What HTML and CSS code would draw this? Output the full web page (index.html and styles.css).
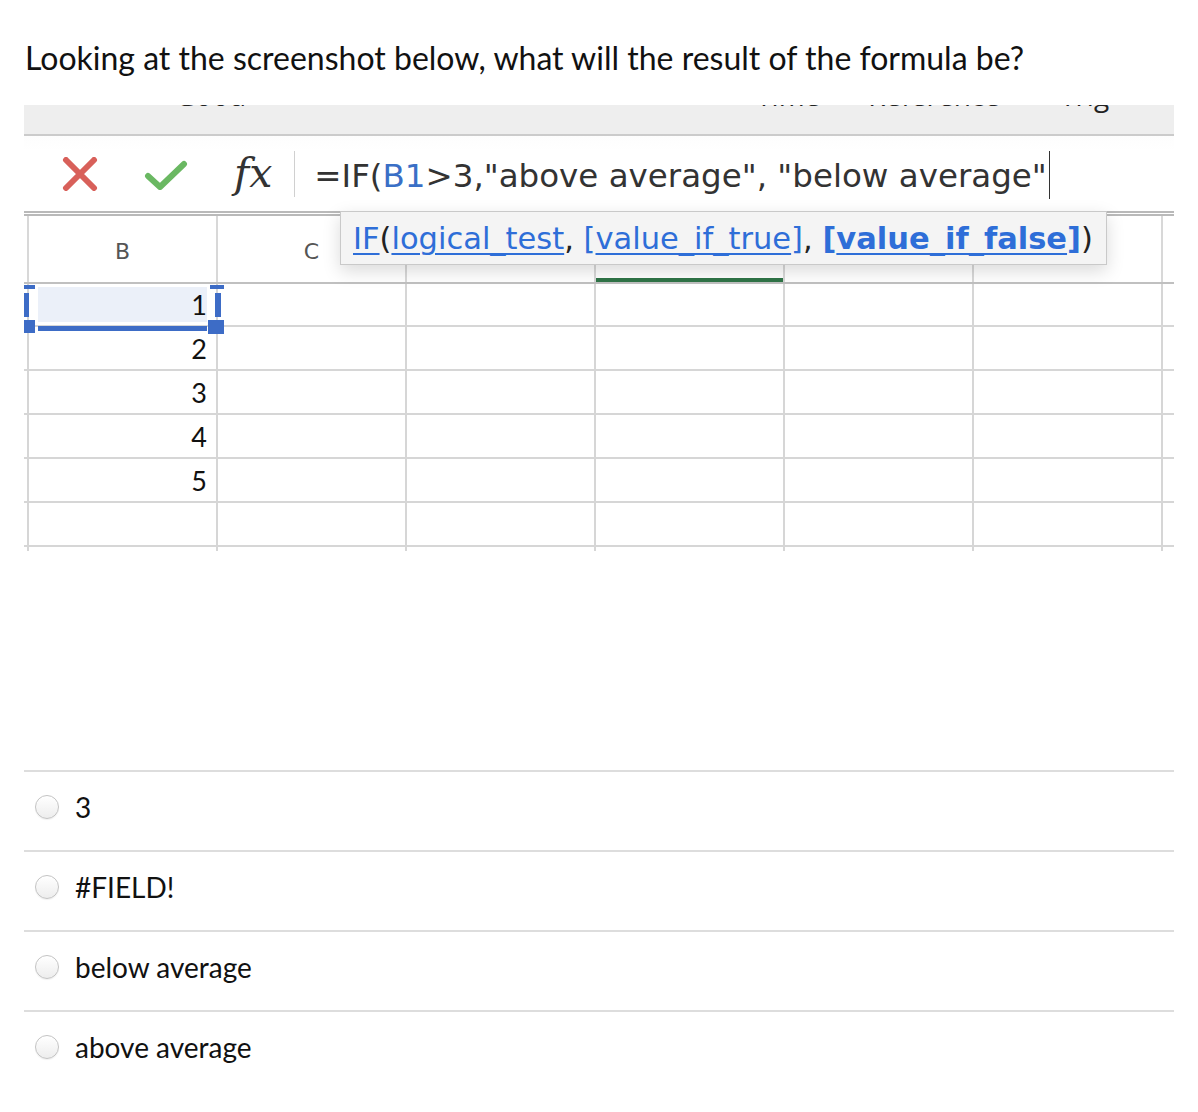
FILE: index.html
```html
<!DOCTYPE html>
<html lang="en">
<head>
    <meta charset="UTF-8">
    <meta name="viewport" content="width=device-width, initial-scale=1.0">
    <title>Quiz question</title>
    <link rel="stylesheet" href="styles.css">
</head>
<body>
    <p class="question">Looking at the screenshot below, what will the result of the formula be?</p>

    <div class="sheet">
        <div class="ribbon">
            <span class="tab tab-good">Good</span>
            <span class="tab tab-time">Time</span>
            <span class="tab tab-ref">Reference</span>
            <span class="tab tab-trig">Trig</span>
        </div>

        <div class="formula-bar">
            <svg class="btn-cancel" width="36" height="34" viewBox="0 0 36 34">
                <path d="M4 3 L32 31 M32 3 L4 31" stroke="#d8605a" stroke-width="6" stroke-linecap="round" fill="none"/>
            </svg>
            <svg class="btn-ok" width="44" height="30" viewBox="0 0 44 30">
                <path d="M4 16 L16 27 L40 4" stroke="#6ab862" stroke-width="6" stroke-linecap="round" stroke-linejoin="round" fill="none"/>
            </svg>
            <span class="fx">fx</span>
            <span class="sep"></span>
            <span class="formula">=IF(<span class="ref">B1</span>&gt;3,"above average", "below average"</span>
            <span class="caret"></span>
        </div>

        <div class="head">
            <div></div>
            <div>B</div>
            <div>C</div>
            <div></div>
            <div class="active"></div>
            <div></div>
            <div></div>
            <div></div>
        </div>

        <div class="body">
            <div class="row first"><div></div><div class="num"><span>1</span></div><div></div><div></div><div></div><div></div><div></div><div></div></div>
            <div class="row"><div></div><div class="num">2</div><div></div><div></div><div></div><div></div><div></div><div></div></div>
            <div class="row"><div></div><div class="num">3</div><div></div><div></div><div></div><div></div><div></div><div></div></div>
            <div class="row"><div></div><div class="num">4</div><div></div><div></div><div></div><div></div><div></div><div></div></div>
            <div class="row"><div></div><div class="num">5</div><div></div><div></div><div></div><div></div><div></div><div></div></div>
            <div class="row"><div></div><div></div><div></div><div></div><div></div><div></div><div></div><div></div></div>
            <div class="row tail"><div></div><div></div><div></div><div></div><div></div><div></div><div></div><div></div></div>

            <!-- selection of B1 with its handles -->
            <svg class="selection" width="202" height="52" viewBox="0 0 202 52">
                <rect x="14" y="3" width="169" height="35" fill="#ebf0f9"/>
                <g fill="#3d6cc6">
                    <rect x="0" y="1" width="11" height="4"/>
                    <rect x="0" y="9" width="5" height="24"/>
                    <rect x="0" y="36" width="11" height="13"/>
                    <rect x="14" y="42" width="169" height="5"/>
                    <rect x="184" y="36" width="16" height="14"/>
                    <rect x="191" y="9" width="6" height="24"/>
                    <rect x="186" y="1" width="14" height="4"/>
                </g>
            </svg>
        </div>

        <div class="tooltip">
            <a>IF</a>(<a>logical_test</a>, <span class="opt">[<a>value_if_true</a>]</span>, <span class="opt cur">[<a>value_if_false</a>]</span>)
        </div>
    </div>

    <div class="answers">
        <label class="answer"><span class="radio"></span>3</label>
        <label class="answer"><span class="radio"></span>#FIELD!</label>
        <label class="answer"><span class="radio"></span>below average</label>
        <label class="answer"><span class="radio"></span>above average</label>
    </div>
</body>
</html>
```

FILE: styles.css
```css
body {
    margin: 0;
    font-family: Lato, "Open Sans", sans-serif;
    color: #111;
    background-color: #fff;
}

.question {
    margin: 0;
    padding: 40px 25px 0;
    font-size: 32px;
    line-height: 36px;
}

.sheet {
    position: relative;
    width: 1150px;
    margin: 29px 24px 0;
    overflow: hidden;
}

/* ribbon, only the bottom of the labels shows */
.ribbon {
    display: flex;
    align-items: flex-start;
    height: 29px;
    background-color: #eeeeee;
    border-bottom: 2px solid #cbcbcb;
    overflow: hidden;
}

.tab {
    font-family: "Open Sans", sans-serif;
    font-size: 28px;
    line-height: 28px;
    margin-top: -24px;
    color: #222;
}

.tab-good { margin-left: 151px; }
.tab-time { margin-left: 510px; }
.tab-ref { margin-left: 48px; }
.tab-trig { margin-left: 60px; }

.formula-bar {
    display: flex;
    align-items: center;
    height: 75px;
    background: linear-gradient(to bottom, #fdfdfd, #fff 20%);
}

.btn-cancel { margin-left: 38px; }
.btn-ok { margin-left: 46px; margin-top: 2px; }

.fx {
    margin-left: 46px;
    font-family: "DejaVu Serif", serif;
    font-style: italic;
    font-size: 41px;
    color: #333;
    margin-top: -2px;
}

.sep {
    width: 1px;
    height: 46px;
    margin-left: 22px;
    background-color: #d0d0d0;
}

.formula {
    margin-left: 19px;
    margin-top: 5px;
    font-family: "DejaVu Sans", sans-serif;
    font-size: 32.5px;
    color: #333;
    white-space: nowrap;
}

.ref { color: #3a6fc6; }

.caret {
    width: 1px;
    height: 48px;
    margin-left: 2px;
    margin-top: 2px;
    background-color: #333;
}

/* column headers */
.head {
    display: grid;
    grid-template-columns: 5px repeat(6, 189px) 1fr;
    height: 66px;
    border-top: 5px double #b9b9b9;
    border-bottom: 2px solid #c0c0c0;
    font-family: "DejaVu Sans", sans-serif;
    font-size: 22px;
    color: #555;
}

.head > div {
    display: flex;
    align-items: center;
    justify-content: center;
    padding-top: 4px;
    border-right: 2px solid #d8d8d8;
}

.head > div:last-child { border-right: none; }

.head .active { box-shadow: inset 0 -4px 0 #2f7447; }

/* cells */
.body { position: relative; }

.row {
    display: grid;
    grid-template-columns: 5px repeat(6, 189px) 1fr;
    height: 44px;
}

.row.first { height: 43px; }

.row > div {
    border-right: 2px solid #d6d6d6;
    border-bottom: 2px solid #d6d6d6;
}

.row > div:last-child { border-right: none; }

.row.tail { height: 4px; }
.row.tail > div { border-bottom: none; }

.num {
    display: flex;
    align-items: center;
    justify-content: flex-end;
    padding-right: 9px;
    font-family: Lato, sans-serif;
    font-size: 27px;
    color: #111;
}

.num span {
    position: relative;
    z-index: 1;
}

.selection {
    position: absolute;
    left: 0;
    top: 0;
}

/* function hint */
.tooltip {
    position: absolute;
    left: 316px;
    top: 106px;
    width: 753px;
    height: 52px;
    padding-left: 12px;
    border: 1px solid #c9c9c9;
    background-color: #f4f4f4;
    box-shadow: 0 6px 18px rgba(0, 0, 0, 0.15);
    font-family: "DejaVu Sans", sans-serif;
    font-size: 30.5px;
    line-height: 54px;
    color: #222;
    white-space: nowrap;
}

.tooltip a {
    color: #2e6ed8;
    text-decoration: underline;
    text-underline-offset: 4px;
    text-decoration-thickness: 2px;
}

.opt { color: #2e6ed8; }
.opt.cur { font-weight: bold; }

/* answers */
.answers {
    margin: 219px 24px 0;
}

.answer {
    display: flex;
    align-items: center;
    height: 70px;
    padding-left: 11px;
    padding-bottom: 8px;
    border-top: 2px solid #dddddd;
    font-size: 28px;
    color: #111;
    cursor: pointer;
}

.radio {
    width: 22px;
    height: 22px;
    margin-right: 16px;
    border: 1px solid #c3c3c3;
    border-radius: 50%;
    background: linear-gradient(to bottom, #ffffff, #ededed);
    box-shadow: inset 0 1px 1px rgba(255, 255, 255, 0.9), 0 1px 1px rgba(0, 0, 0, 0.06);
}
```
